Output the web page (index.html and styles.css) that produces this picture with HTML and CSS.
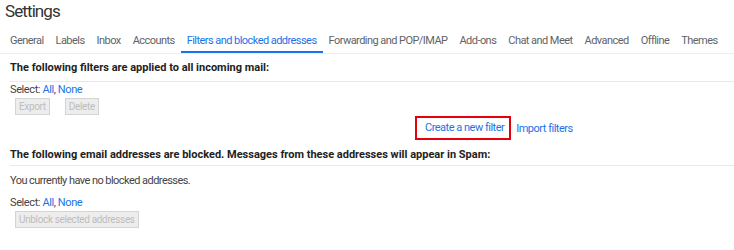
FILE: index.html
```html
<!DOCTYPE html>
<html>
<head>
<meta charset="utf-8">
<link rel="stylesheet" href="styles.css">
</head>
<body>
<div class="page">
  <div class="title">Settings</div>
  <nav class="tabs">
    <span class="tab">General</span>
    <span class="tab">Labels</span>
    <span class="tab">Inbox</span>
    <span class="tab">Accounts</span>
    <span class="tab active">Filters and blocked addresses</span>
    <span class="tab">Forwarding and POP/IMAP</span>
    <span class="tab">Add-ons</span>
    <span class="tab">Chat and Meet</span>
    <span class="tab">Advanced</span>
    <span class="tab">Offline</span>
    <span class="tab">Themes</span>
  </nav>
  <section class="content">
    <div class="heading">The following filters are applied to all incoming mail:</div>
    <div class="select">Select: <a class="link">All</a>, <a class="link">None</a></div>
    <div class="btns">
      <span class="btn">Export</span>
      <span class="btn">Delete</span>
    </div>
    <div class="actions">
      <span class="highlight"><a class="link">Create a new filter</a></span>
      <a class="link">Import filters</a>
    </div>
    <div class="heading h2">The following email addresses are blocked. Messages from these addresses will appear in Spam:</div>
    <div class="note">You currently have no blocked addresses.</div>
    <div class="select s2">Select: <a class="link">All</a>, <a class="link">None</a></div>
    <div class="btns">
      <span class="btn">Unblock selected addresses</span>
    </div>
  </section>
</div>
</body>
</html>
```
FILE: styles.css
```css
html, body { margin: 0; padding: 0; background: #fff; }
body { font-family: Roboto, "Liberation Sans", Arial, sans-serif; color: #222; }
.page { width: 734px; height: 250px; overflow: hidden; }
.title {
  font-size: 17px;
  letter-spacing: -0.9px;
  line-height: 20px;
  padding: 1px 0 0 5px;
  color: #333;
  height: 25px;
}
.tabs {
  display: flex;
  padding-left: 4px;
  border-bottom: 1px solid #eee;
  height: 28px;
  box-sizing: border-box;
  white-space: nowrap;
}
.tab {
  font-size: 11px;
  letter-spacing: -0.55px;
  color: #5f6368;
  padding: 8px 6px 0;
  line-height: 14px;
}
.tab.active {
  color: #1a73e8;
  border-bottom: 2px solid #1a73e8;
  height: 17px;
}
.content { padding-left: 10px; }
.heading {
  font-size: 11px;
  font-weight: bold;
  color: #222;
  padding-top: 7px;
  line-height: 14px;
  border-bottom: 1px solid #e8e8e8;
  box-sizing: border-box;
  height: 28px;
}
.select {
  font-size: 11px;
  letter-spacing: -0.4px;
  color: #444;
  line-height: 14px;
  padding-top: 1px;
}
.link { color: #1a73e8; text-decoration: none; }
.btns {
  display: flex;
  gap: 15px;
  padding: 1px 0 0 5px;
}
.btn {
  font-size: 10px;
  letter-spacing: -0.35px;
  color: #bdbdbd;
  background: #ededed;
  border: 1px solid #d4d4d4;
  padding: 0 3px;
  line-height: 15px;
}
.actions {
  display: flex;
  align-items: center;
  gap: 5px;
  margin: 1px 0 0 405px;
  font-size: 11px;
  letter-spacing: -0.5px;
}
.highlight {
  border: 2px solid #e4000f;
  padding: 3px 5px 4px 8px;
  line-height: 13px;
}
.h2 { padding-top: 8px; height: 26px; }
.note {
  font-size: 11px;
  letter-spacing: -0.55px;
  color: #444;
  line-height: 14px;
  padding-top: 8px;
}
.s2 { padding-top: 8px; }
```
